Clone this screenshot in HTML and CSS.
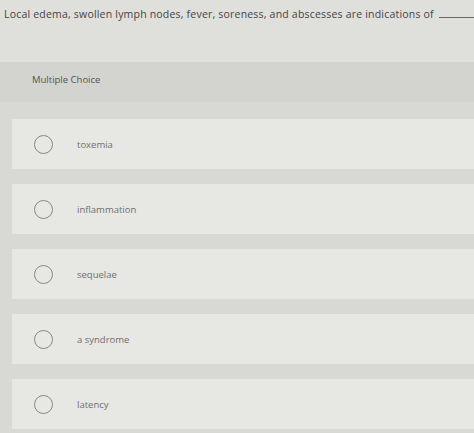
FILE: index.html
```html
<!DOCTYPE html>
<html>
<head>
<meta charset="utf-8">
<link rel="stylesheet" href="styles.css">
</head>
<body>
<div class="question">Local edema, swollen lymph nodes, fever, soreness, and abscesses are indications of <span class="blank"></span></div>
<div class="header">Multiple Choice</div>
<div class="options">
  <div class="option"><span class="radio"></span><span class="label">toxemia</span></div>
  <div class="option"><span class="radio"></span><span class="label">inflammation</span></div>
  <div class="option"><span class="radio"></span><span class="label">sequelae</span></div>
  <div class="option"><span class="radio"></span><span class="label">a syndrome</span></div>
  <div class="option"><span class="radio"></span><span class="label">latency</span></div>
</div>
</body>
</html>
```
FILE: styles.css
```css
html, body {
  margin: 0;
  padding: 0;
}
body {
  width: 474px;
  height: 433px;
  overflow: hidden;
  background: #dfdfdc;
  font-family: "Open Sans", Lato, sans-serif;
}
.question {
  height: 62px;
  box-sizing: border-box;
  padding: 7px 0 0 4px;
  font-size: 10.5px;
  letter-spacing: 0.2px;
  color: #454545;
  white-space: nowrap;
  line-height: 14px;
}
.blank {
  display: inline-block;
  width: 42px;
  margin-left: 2px;
  border-bottom: 1px solid #666;
  vertical-align: baseline;
}
.header {
  height: 40px;
  box-sizing: border-box;
  background: #d3d3d0;
  padding: 12px 0 0 32px;
  font-size: 9.5px;
  color: #555;
  line-height: 12px;
}
.options {
  display: flex;
  flex-direction: column;
  gap: 15px;
  padding: 17px 0 20px 12px;
  background: #d8d8d5;
}
.option {
  height: 50px;
  background: #e7e7e4;
  display: flex;
  align-items: center;
  padding-left: 22px;
}
.radio {
  width: 17px;
  height: 17px;
  border: 1.5px solid #868686;
  border-radius: 50%;
  flex: none;
}
.label {
  margin-left: 24px;
  font-size: 9.5px;
  color: #6f6f6f;
}
```
